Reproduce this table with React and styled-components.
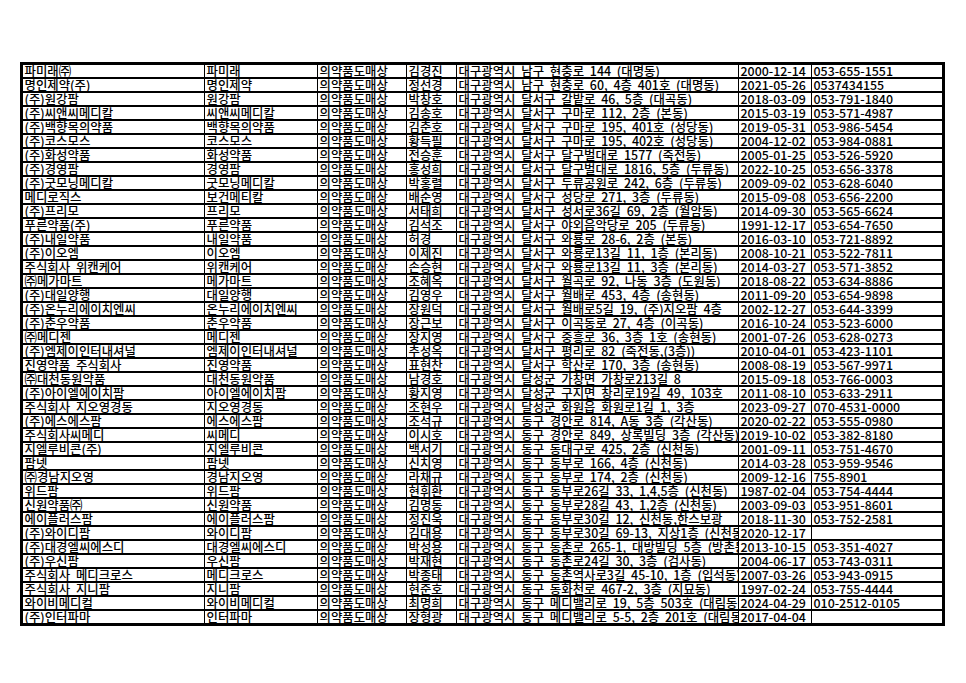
import React from "react";
import styled, { createGlobalStyle } from "styled-components";

const GlobalStyle = createGlobalStyle`
  html, body { margin: 0; padding: 0; background: #ffffff; }
  body { font-family: "Noto Sans CJK KR", "Noto Sans", sans-serif; color: #000; }
`;

const Page = styled.div`
  width: 966px;
  height: 683px;
  box-sizing: border-box;
  padding: 62px 0 0 20px;
  background: #fff;
`;

const Sheet = styled.table`
  border-collapse: collapse;
  table-layout: fixed;
  width: 922px;
  height: 557px;
  border: 3px solid #000;
  font-family: "Noto Sans CJK KR", "Noto Sans", sans-serif;
  font-size: 12.4px;
  font-weight: 500;
  word-spacing: 3px;
  color: #000;
`;

const Row = styled.tr`
  height: 13.9px;
`;

const Cell = styled.td`
  border-top: 2px solid #000;
  border-bottom: 2px solid #000;
  border-left: 1px solid #000;
  border-right: 1px solid #000;
  padding: 0 0 0 1.5px;
  height: 11.9px;
  line-height: 12px;
  white-space: nowrap;
  overflow-x: clip;
  overflow-y: visible;
  overflow-clip-margin: 0;
  vertical-align: bottom;
`;

const widths = [183, 113, 89, 50, 282, 73, 132];

const rows = [
  ["파미래㈜", "파미래", "김경진", "대구광역시 남구 현충로 144 (대명동)", "2000-12-14", "053-655-1551"],
  ["명인제약(주)", "명인제약", "정선경", "대구광역시 남구 현충로 60, 4층 401호 (대명동)", "2021-05-26", "0537434155"],
  ["(주)원강팜", "원강팜", "박창호", "대구광역시 달서구 갈밭로 46, 5층 (대곡동)", "2018-03-09", "053-791-1840"],
  ["(주)씨앤씨메디칼", "씨앤씨메디칼", "김송호", "대구광역시 달서구 구마로 112, 2층 (본동)", "2015-03-19", "053-571-4987"],
  ["(주)백향목의약품", "백향목의약품", "김춘호", "대구광역시 달서구 구마로 195, 401호 (성당동)", "2019-05-31", "053-986-5454"],
  ["(주)코스모스", "코스모스", "황득필", "대구광역시 달서구 구마로 195, 402호 (성당동)", "2004-12-02", "053-984-0881"],
  ["(주)화성약품", "화성약품", "전승훈", "대구광역시 달서구 달구벌대로 1577 (죽전동)", "2005-01-25", "053-526-5920"],
  ["(주)경영팜", "경영팜", "홍성희", "대구광역시 달서구 달구벌대로 1816, 5층 (두류동)", "2022-10-25", "053-656-3378"],
  ["(주)굿모닝메디칼", "굿모닝메디칼", "박홍렬", "대구광역시 달서구 두류공원로 242, 6층 (두류동)", "2009-09-02", "053-628-6040"],
  ["메디로직스", "보건메티칼", "배순영", "대구광역시 달서구 성당로 271, 3층 (두류동)", "2015-09-08", "053-656-2200"],
  ["(주)프리모", "프리모", "서태희", "대구광역시 달서구 성서로36길 69, 2층 (월암동)", "2014-09-30", "053-565-6624"],
  ["푸른약품(주)", "푸른약품", "김석조", "대구광역시 달서구 야외음악당로 205 (두류동)", "1991-12-17", "053-654-7650"],
  ["(주)내일약품", "내일약품", "허경", "대구광역시 달서구 와룡로 28-6, 2층 (본동)", "2016-03-10", "053-721-8892"],
  ["(주)이오엠", "이오엠", "이제진", "대구광역시 달서구 와룡로13길 11, 1층 (본리동)", "2008-10-21", "053-522-7811"],
  ["주식회사 위캔케어", "위캔케어", "손승현", "대구광역시 달서구 와룡로13길 11, 3층 (본리동)", "2014-03-27", "053-571-3852"],
  ["㈜메가마트", "메가마트", "조혜옥", "대구광역시 달서구 월곡로 92, 나동 3층 (도원동)", "2018-08-22", "053-634-8886"],
  ["(주)대일양행", "대일양행", "김영우", "대구광역시 달서구 월배로 453, 4층 (송현동)", "2011-09-20", "053-654-9898"],
  ["(주)온누리에이치엔씨", "온누리에이치엔씨", "장원덕", "대구광역시 달서구 월배로5길 19, (주)지오팜 4층", "2002-12-27", "053-644-3399"],
  ["(주)춘우약품", "춘우약품", "장근보", "대구광역시 달서구 이곡동로 27, 4층 (이곡동)", "2016-10-24", "053-523-6000"],
  ["㈜메디젠", "메디젠", "장지영", "대구광역시 달서구 중흥로 36, 3층 1호 (송현동)", "2001-07-26", "053-628-0273"],
  ["(주)엠제이인터내셔널", "엠제이인터내셔널", "추성옥", "대구광역시 달서구 평리로 82 (죽전동,(3층))", "2010-04-01", "053-423-1101"],
  ["진영약품 주식회사", "진영약품", "표현찬", "대구광역시 달서구 학산로 170, 3층 (송현동)", "2008-08-19", "053-567-9971"],
  ["㈜대천동원약품", "대천동원약품", "남경호", "대구광역시 달성군 가창면 가창로213길 8", "2015-09-18", "053-766-0003"],
  ["(주)아이엘에이치팜", "아이엘에이치팜", "황지영", "대구광역시 달성군 구지면 창리로19길 49, 103호", "2011-08-10", "053-633-2911"],
  ["주식회사 지오영경동", "지오영경동", "조현우", "대구광역시 달성군 화원읍 화원로1길 1, 3층", "2023-09-27", "070-4531-0000"],
  ["(주)에스에스팜", "에스에스팜", "조석규", "대구광역시 동구 경안로 814, A동 3층 (각산동)", "2020-02-22", "053-555-0980"],
  ["주식회사씨메디", "씨메디", "이시호", "대구광역시 동구 경안로 849, 상록빌딩 3층 (각산동)", "2019-10-02", "053-382-8180"],
  ["지엘루비콘(주)", "지엘루비콘", "백서기", "대구광역시 동구 동대구로 425, 2층 (신천동)", "2001-09-11", "053-751-4670"],
  ["팜넷", "팜넷", "신치영", "대구광역시 동구 동부로 166, 4층 (신천동)", "2014-03-28", "053-959-9546"],
  ["㈜경남지오영", "경남지오영", "라채규", "대구광역시 동구 동부로 174, 2층 (신천동)", "2009-12-16", "755-8901"],
  ["위드팜", "위드팜", "현휘환", "대구광역시 동구 동부로26길 33, 1,4,5층 (신천동)", "1987-02-04", "053-754-4444"],
  ["신원약품㈜", "신원약품", "김명동", "대구광역시 동구 동부로28길 43, 1,2층 (신천동)", "2003-09-03", "053-951-8601"],
  ["에이플러스팜", "에이플러스팜", "정진욱", "대구광역시 동구 동부로30길 12, 신천동,한스보광", "2018-11-30", "053-752-2581"],
  ["(주)와이디팜", "와이디팜", "김대용", "대구광역시 동구 동부로30길 69-13, 지상1층 (신천동)", "2020-12-17", ""],
  ["(주)대경엘씨에스디", "대경엘씨에스디", "박성용", "대구광역시 동구 동촌로 265-1, 대방빌딩 5층 (방촌동)", "2013-10-15", "053-351-4027"],
  ["(주)우신팜", "우신팜", "박재현", "대구광역시 동구 동촌로24길 30, 3층 (검사동)", "2004-06-17", "053-743-0311"],
  ["주식회사 메디크로스", "메디크로스", "박종태", "대구광역시 동구 동촌역사로3길 45-10, 1층 (입석동)", "2007-03-26", "053-943-0915"],
  ["주식회사 지니팜", "지니팜", "현준호", "대구광역시 동구 동화천로 467-2, 3층 (지묘동)", "1997-02-24", "053-755-4444"],
  ["와이비메디컬", "와이비메디컬", "최명희", "대구광역시 동구 메디밸리로 19, 5층 503호 (대림동)", "2024-04-29", "010-2512-0105"],
  ["(주)인터파마", "인터파마", "장형광", "대구광역시 동구 메디밸리로 5-5, 2층 201호 (대림동)", "2017-04-04", ""],
];

export default function App() {
  return (
    <Page>
      <GlobalStyle />
      <Sheet>
        <colgroup>
          {widths.map((w, i) => (
            <col key={i} style={{ width: w }} />
          ))}
        </colgroup>
        <tbody>
          {rows.map((r, i) => (
            <Row key={i}>
              <Cell>{r[0]}</Cell>
              <Cell>{r[1]}</Cell>
              <Cell>의약품도매상</Cell>
              <Cell>{r[2]}</Cell>
              <Cell>{r[3]}</Cell>
              <Cell>{r[4]}</Cell>
              <Cell>{r[5]}</Cell>
            </Row>
          ))}
        </tbody>
      </Sheet>
    </Page>
  );
}
